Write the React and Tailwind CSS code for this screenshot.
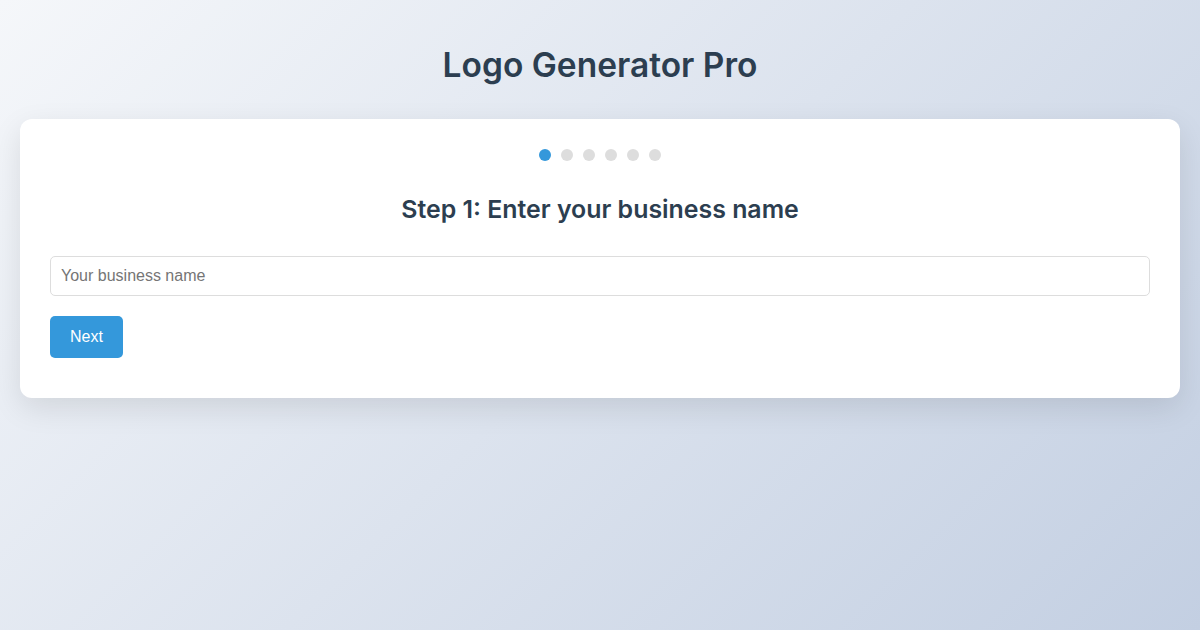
import { useState } from 'react';

const TOTAL_STEPS = 6;

export default function App() {
    const [name, setName] = useState('');
    const step = 0;

    return (
        <div className="min-h-screen w-full bg-[linear-gradient(135deg,#f5f7fa_0%,#c3cfe2_100%)] p-5 text-[#2c3e50] font-['Inter',sans-serif]">
            <h1 className="mt-[21px] mb-[30px] text-center text-[33.5px] leading-[48px] font-semibold">
                Logo Generator Pro
            </h1>

            <div className="rounded-xl bg-white px-[30px] pt-[30px] pb-10 shadow-[0_10px_30px_rgba(0,0,0,0.1)]">
                <div className="flex justify-center gap-[10px]">
                    {Array.from({ length: TOTAL_STEPS }).map((_, i) => (
                        <span
                            key={i}
                            className={`h-3 w-3 rounded-full ${i === step ? 'bg-[#3498db]' : 'bg-[#dddddd]'}`}
                        />
                    ))}
                </div>

                <h2 className="mt-[30px] mb-[29px] text-center text-[24.9px] leading-9 font-semibold">
                    Step 1: Enter your business name
                </h2>

                <input
                    type="text"
                    value={name}
                    onChange={(e) => setName(e.target.value)}
                    placeholder="Your business name"
                    className="block h-10 w-full rounded-[5px] border border-[#dddddd] px-[10px] text-base text-[#2c3e50] outline-none placeholder:text-[#757575] font-['Liberation_Sans',Arial,sans-serif]"
                />

                <button className="mt-5 h-[42px] rounded-[5px] bg-[#3498db] px-5 text-base text-white font-['Liberation_Sans',Arial,sans-serif]">
                    Next
                </button>
            </div>
        </div>
    );
}
